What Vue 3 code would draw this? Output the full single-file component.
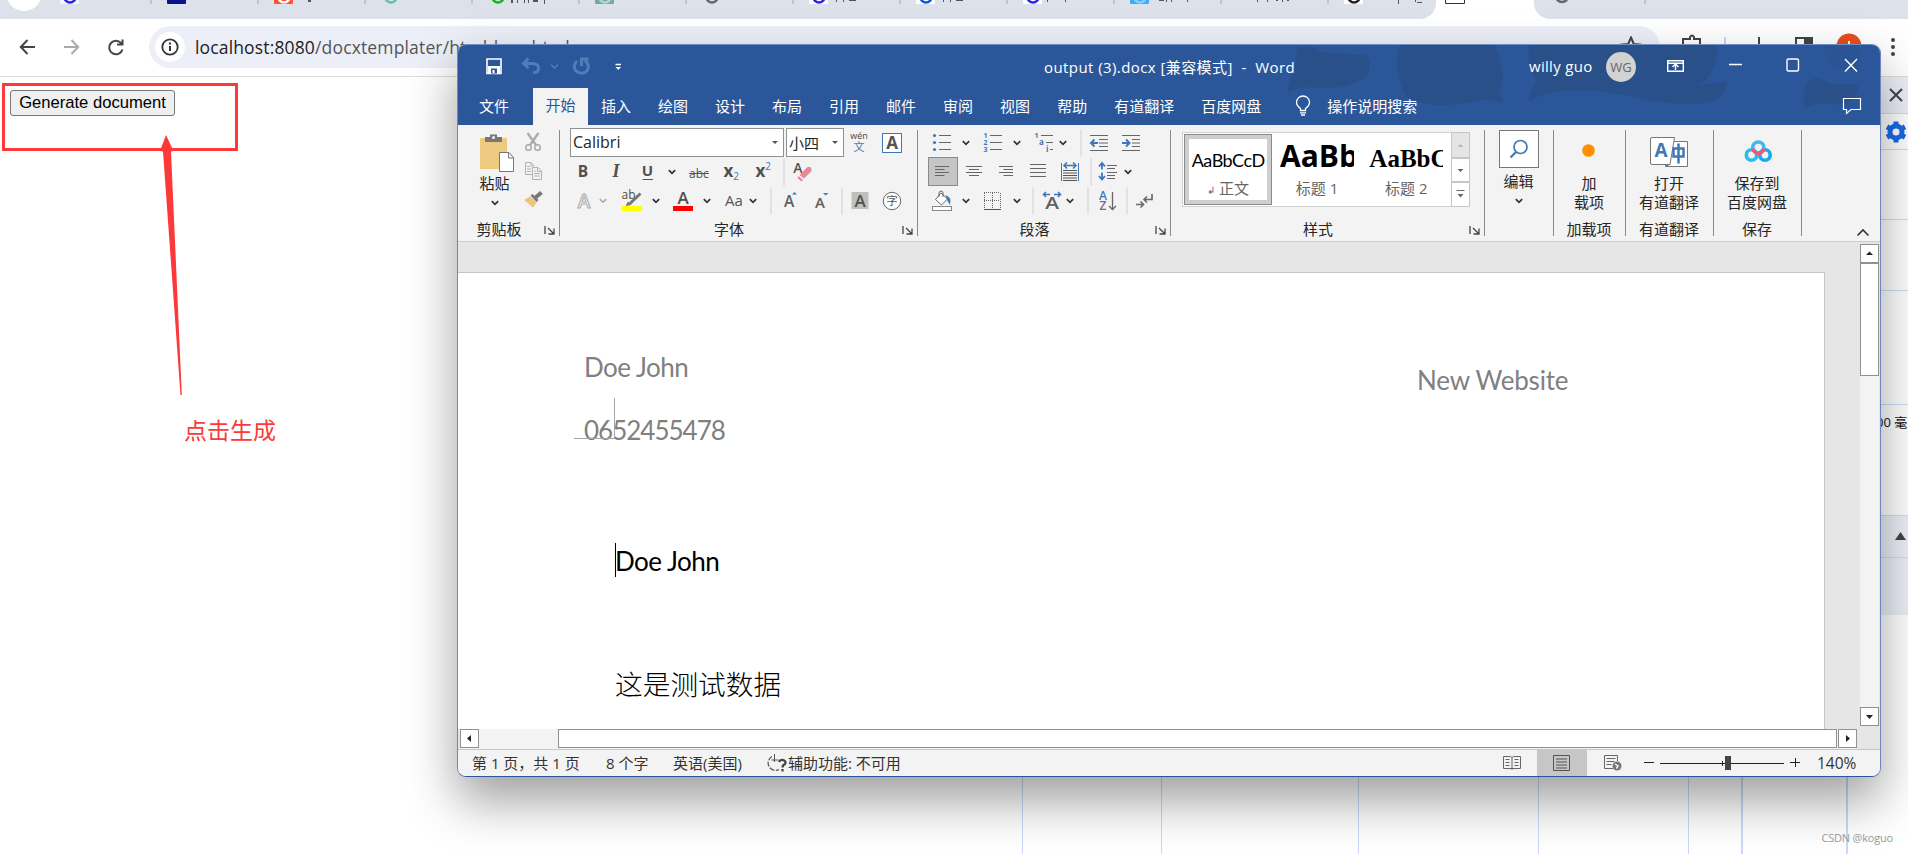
<script setup>
import { ref } from 'vue'

// browser tabs, only their bottom edge is on screen
const tabs = ref([
  { fill: '#f4f6ff', mark: '#2a25e0', text: '' },
  { fill: '#0b128c', mark: '', text: '' },
  { fill: '#ff5430', mark: '#fff', text: 'M49 0h3v2h-3z' },
  { fill: '', mark: '#68bdb2', text: '' },
  { fill: '', mark: '#12b812', text: 'M38 0h2v3h-2zM44 0h1v3h-1zM51 0h1v3h-1zM55 0h1v3h-1zM60 0h5v2h-5zM71 0h1v4h-1z' },
  { fill: '#74aa9c', mark: '#b9d6ce', text: '' },
  { fill: '', mark: '#666', text: '' },
  { fill: '#fff', mark: '#2a25e0', text: 'M42 0h1v2h-1zM49 0h1v2h-1zM55 0h7v1h-7z' },
  { fill: '#fff', mark: '#0d58d8', text: 'M42 0h1v2h-1zM49 0h1v2h-1zM55 0h7v1h-7z' },
  { fill: '#fff', mark: '#2a25e0', text: 'M39 0h1v2h-1zM57 0h1v2h-1z' },
  { fill: '#39adfb', mark: '#8bd0fd', text: 'M44 0h5v1h-5zM51 0h1v2h-1zM56 0h1v2h-1zM72 0h1v2h-1z' },
  { fill: '', mark: '', text: 'M35 0h1v2h-1zM45 0h1v2h-1zM54 0h2v1h-2zM60 0h1v2h-1zM65 0h2v1h-2z' },
  { fill: '#fff', mark: '#222', text: 'M69 0h1v4h-1zM86 0h1v2h-1zM88 2h5v1h-5z' }
])

const menus = ['插入', '绘图', '设计', '布局', '引用', '邮件', '审阅', '视图', '帮助', '有道翻译', '百度网盘']

const T = 'font-family="Open Sans, Noto Sans" '
const icons = {
  chev: '<path d="M8.8 10.1 12 13.3 15.2 10.1" fill="none" stroke="#333" stroke-width="1.7"/>',
  chevOff: '<path d="M8.8 10.1 12 13.3 15.2 10.1" fill="none" stroke="#aaa" stroke-width="1.5"/>',
  sep: '<path d="M12-1.5v27" stroke="#cfcfcf"/>',
  cut: '<path d="M6.500 3 15 15M17.500 3 9 15" stroke="#aaa" stroke-width="2.200"/><circle cx="7.500" cy="17.500" r="2.800" fill="none" stroke="#aaa" stroke-width="1.500"/><circle cx="16.500" cy="17.500" r="2.800" fill="none" stroke="#aaa" stroke-width="1.500"/>',
  copy: '<path d="M11 15.500H4.500V3.500H10L13.500 7M10 3.500V7h3M6 7.500h3M6 10h4M6 12.500h4" fill="none" stroke="#b3b0b3"/><path d="M11.500 8.500H17L20.500 12v8.500h-9zM16.500 8.500v4h4M13 12h2M13 14.500h6M13 17h6" fill="#f3f3f3" stroke="#b3b0b3"/>',
  painter: '<path d="M3 12 9 8.500 15.500 14.500 12 19.500z" fill="#eec47d"/><path d="M9.500 7.500 11.500 6 17.500 12 15.500 14z" fill="#777"/><path d="M14.500 9.500 20.500 4.500" stroke="#777" stroke-width="4"/>',
  pinyin: '<text x="12" y="7.500" ' + T + 'font-size="9" text-anchor="middle" fill="#444">wén</text><text x="12" y="19.500" font-family="Noto Sans CJK SC" font-size="11" text-anchor="middle" fill="#3f78b5">文</text>',
  boxA: '<rect x="2.500" y="2.500" width="19" height="19" fill="#fff" stroke="#3f78b5"/><text x="12" y="18" ' + T + 'font-size="17" font-weight="700" text-anchor="middle" fill="#555">A</text>',
  bold: '<text x="12" y="17" ' + T + 'font-size="15.500" font-weight="700" text-anchor="middle" fill="#505050">B</text>',
  italic: '<text x="12" y="17" font-family="Liberation Serif" font-size="18" font-weight="700" font-style="italic" text-anchor="middle" fill="#505050">I</text>',
  under: '<text x="12.500" y="15.500" ' + T + 'font-size="15" font-weight="700" text-anchor="middle" fill="#505050">U</text><path d="M7.500 19.500h10.500" stroke="#555" stroke-width="1.200"/>',
  strike: '<text x="12" y="17.500" ' + T + 'font-size="12" text-anchor="middle" fill="#555">abc</text><path d="M2 13.500h20" stroke="#555" stroke-width="1.200"/>',
  subs: '<text x="9.500" y="17" ' + T + 'font-size="17" font-weight="700" text-anchor="middle" fill="#505050">x</text><text x="17" y="20" ' + T + 'font-size="10" text-anchor="middle" fill="#3f78b5">2</text>',
  sups: '<text x="9.500" y="17" ' + T + 'font-size="17" font-weight="700" text-anchor="middle" fill="#505050">x</text><text x="17" y="10" ' + T + 'font-size="10" text-anchor="middle" fill="#3f78b5">2</text>',
  eraser: '<text x="7" y="12.500" ' + T + 'font-size="14" font-weight="600" text-anchor="middle" fill="#555">A</text><path d="M8.500 15 16 7.500Q18 6 19.500 7.500L20.500 9Q21 10.500 20 11.500L13 18.500z" fill="#e6879a"/><path d="M7.500 16 12 20 10.500 21.500 6.500 18z" fill="#e6879a"/>',
  outA: '<text x="12" y="19" ' + T + 'font-size="19" font-weight="600" text-anchor="middle" fill="#f6f6f6" stroke="#b0b0b0" stroke-width="1.100">A</text>',
  mark: '<text x="8.500" y="10" ' + T + 'font-size="12" text-anchor="middle" fill="#505050">ab</text><path d="M10 14.500 20.500 4.500" stroke="#777" stroke-width="3"/><path d="M5.500 17 8 12.500 11.500 16z" fill="#777"/><path d="M2 17h20v5H2z" fill="#ff0"/>',
  color: '<text x="12" y="15" ' + T + 'font-size="17" font-weight="600" text-anchor="middle" fill="#505050">A</text><path d="M2 17h20v5H2z" fill="red"/>',
  case: '<text x="12" y="17" ' + T + 'font-size="15" text-anchor="middle" fill="#555">Aa</text>',
  grow: '<text x="11" y="18" ' + T + 'font-size="15.500" font-weight="600" text-anchor="middle" fill="#606060">A</text><path d="M14 5.500 16.500 3 19 5.500z" fill="#3f78b5"/>',
  shrink: '<text x="10" y="18.500" ' + T + 'font-size="15" font-weight="600" text-anchor="middle" fill="#606060">A</text><path d="M13 4h5.500L15.700 6.500z" fill="#3f78b5"/>',
  shade: '<path d="M3.500 3H20.500V20H3.500z" fill="#bfbfbf"/><text x="12" y="17.500" ' + T + 'font-size="17" font-weight="600" text-anchor="middle" fill="#505050">A</text>',
  circled: '<circle cx="12" cy="12" r="8.700" fill="#fff" stroke="#666"/><text x="12" y="16.300" font-family="Noto Sans CJK SC" font-size="11.500" text-anchor="middle" fill="#555">字</text>',
  bullets: '<path d="M9 4.500h12M9 11.500h12M9 18.500h12" stroke="#666"/><g fill="#3f78b5"><circle cx="4.500" cy="4.500" r="1.600"/><circle cx="4.500" cy="11.500" r="1.600"/><circle cx="4.500" cy="18.500" r="1.600"/></g>',
  numbers: '<path d="M9 4.500h12M9 11.500h12M9 18.500h12" stroke="#666"/><g ' + T + 'font-size="7" font-weight="700" fill="#3f78b5"><text x="2.500" y="7">1</text><text x="2.500" y="14">2</text><text x="2.500" y="21">3</text></g>',
  levels: '<path d="M9 4.500h12M14 11.500h7M18 18.500h3" stroke="#666"/><g ' + T + 'font-weight="700" fill="#3f78b5"><text x="2.500" y="7" font-size="7">1</text><text x="7" y="13.500" font-size="8">a</text><text x="14" y="21" font-size="8">i</text></g>',
  outdent: '<path d="M3 4.500h18M12 8.500h9M12 12h9M12 15.500h9M3 19.500h18" stroke="#666"/><path d="M11 12H5M7.500 8.500 4 12 7.500 15.500" fill="none" stroke="#3f78b5" stroke-width="2"/>',
  indent: '<path d="M3 4.500h18M13 8.500h8M13 12h8M13 15.500h8M3 19.500h18" stroke="#666"/><path d="M3 12H9.500M7 8.500 10.500 12 7 15.500" fill="none" stroke="#3f78b5" stroke-width="2"/>',
  left: '<rect x="-2.500" y="-2.500" width="29" height="28" fill="#c5c5c5" stroke="#8a8a8a"/><path d="M4 6.500h14M4 9.500h9.500M4 12.500h14M4 15.500h9.500" stroke="#666"/>',
  center: '<path d="M4 6.500h16M7 9.500h10M4 12.500h16M7 15.500h10" stroke="#666"/>',
  right: '<path d="M5 6.500h14M9.500 9.500h9.500M5 12.500h14M9.500 15.500h9.500" stroke="#666"/>',
  justify: '<path d="M4 4.500h16M4 8.500h16M4 12.500h16M4 16.500h16" stroke="#666"/>',
  spread: '<path d="M3.500 3v18M20.500 3v18" stroke="#3f78b5"/><path d="M7 5.500h10M9 2.500 6 5.500 9 8.500M15 2.500 18 5.500 15 8.500" fill="none" stroke="#3f78b5" stroke-width="1.600"/><path d="M5 10.500h14M5 13h14M5 15.500h14M5 18h14M5 20.500h14" stroke="#555"/>',
  spacing: '<path d="M6 4v5.500M3 6.500 6 3 9 6.500M6 12.500v6M3 16 6 19.500 9 16" fill="none" stroke="#3f78c0" stroke-width="1.800"/><path d="M11 5.500h10M11 8.500h8M11 12.500h10M11 15.500h8M11 18.500h8" stroke="#666"/>',
  fill: '<path d="M11 4 17.500 10 11.500 16 5.500 10.500z" fill="#fff" stroke="#666"/><path d="M9 8V4Q9 2 11 2T13 4V8" fill="none" stroke="#666"/><path d="M15.500 6Q22 8 20 16L17.500 12z" fill="#3f78b5"/><rect x="2.500" y="17.500" width="19" height="4" fill="#fff" stroke="#888"/>',
  borders: '<path d="M4 3.500h16M4 11.500h16M4.500 4v16M12.500 4v16M20.500 4v16" stroke="#666" stroke-dasharray="1 1"/><path d="M4 20.500h17" stroke="#555"/>',
  scaleA: '<text transform="translate(12 19.500) scale(1.300 1)" ' + T + 'font-size="16" font-weight="600" text-anchor="middle" fill="#606060">A</text><path d="M3 5.500h7M6 3 3.500 5.500 6 8M14 5.500h7M18 3 20.500 5.500 18 8" fill="none" stroke="#3f78b5" stroke-width="1.600"/>',
  sort: '<text x="8" y="11" ' + T + 'font-size="12" font-weight="600" text-anchor="middle" fill="#3f78b5">A</text><text x="8" y="21" ' + T + 'font-size="12" font-weight="600" text-anchor="middle" fill="#9354ab">Z</text><path d="M17.500 3v17M14 17 17.500 20.500 21 17" fill="none" stroke="#666" stroke-width="1.300"/>',
  marks: '<path d="M20 5v5.500H12.500M15 7.500 12 10.500 15 13.500M4 15.500h7M8.500 12.500 11.500 15.500 8.500 18.500" fill="none" stroke="#6a6a6a" stroke-width="1.700"/>'
}

// [icon, centre] pairs turned into the gaps of a flex row
const row = (start, items) => {
  let x = start
  return items.map(([name, centre]) => {
    const gap = centre - 12 - x
    x = centre + 12
    return { name, gap }
  })
}

const fontRows = [
  row(844, [['pinyin', 859], ['boxA', 892]]),
  row(570, [['bold', 583], ['italic', 616], ['under', 647], ['chev', 672], ['strike', 699], ['subs', 731], ['sups', 763], ['sep', 783.5], ['eraser', 803]]),
  row(570, [['outA', 584], ['chevOff', 603], ['mark', 632], ['chev', 656], ['color', 683], ['chev', 707], ['case', 734], ['chev', 753], ['sep', 770.5], ['grow', 790], ['shrink', 822], ['sep', 841.5], ['shade', 860], ['circled', 892]])
]
const paraRows = [
  row(918, [['bullets', 942], ['chev', 966], ['numbers', 993], ['chev', 1017], ['levels', 1044], ['chev', 1063], ['sep', 1080.5], ['outdent', 1099], ['indent', 1131]]),
  row(918, [['left', 943], ['center', 974], ['right', 1006], ['justify', 1038], ['spread', 1070], ['sep', 1090.5], ['spacing', 1108], ['chev', 1128]]),
  row(918, [['fill', 942], ['chev', 966], ['borders', 992], ['chev', 1017], ['sep', 1032.5], ['scaleA', 1052], ['chev', 1070], ['sep', 1087.5], ['sort', 1107], ['sep', 1126.5], ['marks', 1144]])
]
</script>

<template>
  <main class="screen">
    <!-- browser -->
    <div class="tabstrip">
      <div class="tab-search"></div>
      <svg v-for="(tab, i) in tabs" :key="i" class="tab" width="107" height="19">
        <rect v-if="tab.fill" x="15" y="-14" width="19" height="18" rx="1" :fill="tab.fill" />
        <circle v-if="tab.mark" cx="25" cy="-3" r="5.5" fill="none" stroke-width="2.5" :stroke="tab.mark" />
        <path :d="tab.text" fill="#555" />
        <path v-if="i < 12" d="M107 0v4" stroke="#c4c4c4" stroke-width="4" />
      </svg>
      <div class="tab-active">
        <svg width="20" height="4"><path d="M.5 0v3.500h19V0" fill="none" stroke="#333" /></svg>
      </div>
      <div class="tab-last">
        <svg width="120" height="4"><circle cx="28" cy="-4" r="6" fill="none" stroke="#666" stroke-width="2.500" /><path d="M111 0v4" stroke="#c4c4c4" stroke-width="2" /></svg>
      </div>
    </div>
    <div class="toolbar">
      <svg class="nav" width="120" height="24" viewBox="0 0 120 24" fill="none" stroke-width="2">
        <path d="M16 12H2M8.500 5 1.800 12 8.500 19" stroke="#444" />
        <path d="M45 12H59M52.500 5 59.200 12 52.500 19" stroke="#aaa" />
        <path d="M102.500 8.500A6.800 6.800 0 1 0 103.500 14.500M103.500 4.500V9.500H98" stroke="#444" />
      </svg>
      <div class="omnibox">
        <span class="info">
          <svg width="20" height="20" viewBox="0 0 20 20"><circle cx="10" cy="10" r="7.700" fill="none" stroke="#333" stroke-width="1.800" /><path d="M10 9v5M10 5.500v2" stroke="#333" stroke-width="2" /></svg>
        </span>
        <span class="url"><b>localhost:8080</b>/docxtemplater/htmldocx.html</span>
        <svg class="star" width="22" height="22" viewBox="0 0 22 22"><path d="M11 1.500 13.800 8 20.500 8.600 15.500 13 17 20 11 16.500 5 20 6.500 13 1.500 8.600 8.200 8z" fill="none" stroke="#444" stroke-width="2" /></svg>
      </div>
      <svg class="actions" width="240" height="40" viewBox="0 0 240 40" fill="none" stroke="#444" stroke-width="2">
        <path d="M23 25V12H30V10Q32 7 34 10V12H40V25" />
        <path d="M65 10v20" stroke="#c6d8f8" />
        <path d="M99 10v14M93 18 99 24 105 18" />
        <path d="M136 25V11H152V25" /><path d="M145 11h7v12h-7z" fill="#444" />
        <circle cx="189" cy="19" r="12.500" fill="#ea4d1c" stroke="none" /><path d="M189 14v6" stroke="#fff" />
        <g fill="#444" stroke="none"><circle cx="233" cy="13" r="2" /><circle cx="233" cy="20" r="2" /><circle cx="233" cy="27" r="2" /></g>
      </svg>
    </div>

    <div class="viewport">
      <div class="webpage">
        <button class="generate">Generate document</button>
      </div>
      <!-- devtools behind the word window -->
      <div class="devtools">
        <div class="columns"><i v-for="n in 7" :key="n"></i></div>
        <div class="side">
          <div class="side-close"><svg width="16" height="16"><path d="M2 2 14 14M14 2 2 14" stroke="#444" stroke-width="2" /></svg></div>
          <div class="side-gear">
            <svg width="22" height="22" viewBox="-11 -11 22 22"><circle r="6" fill="none" stroke="#1a6be8" stroke-width="5" /><path d="M0-10.500V-7M0 7v3.500M-9-5.200-6-3.500M6 3.500 9 5.200M-9 5.200-6 3.500M6-3.500 9-5.200" stroke="#1a6be8" stroke-width="5" /></svg>
          </div>
          <div class="side-a"></div>
          <div class="side-b"></div>
          <div class="side-c">00 毫</div>
          <div class="side-e"><svg width="11" height="10"><path d="M5.500 0 11 8H0z" fill="#444" /></svg></div>
          <div class="side-f"></div>
        </div>
      </div>
    </div>

    <!-- word window -->
    <section class="word">
      <header class="titlebar">
        <svg class="art" width="860" height="80" viewBox="1020 45 860 80" fill="#2a5089">
          <path d="M1297 48Q1312 44 1320 52L1365 55Q1375 65 1365 78 1345 90 1320 88 1300 85 1287 93 1290 78 1295 68z" />
          <path d="M1400 45H1495Q1508 75 1499 93 1503 97 1502 104 1488 98 1480 100 1430 112 1405 96 1392 65 1400 45z" />
          <path d="M1529 45H1717Q1717 84 1690 86L1664 88 1716 83 1727 82Q1727 100 1700 104 1660 105 1630 96 1560 83 1529 101 1530 90 1537 82 1526 65 1529 45z" />
          <path d="M1823 45H1860V70H1832z" opacity=".4" />
          <path d="M1804 109Q1801 78 1818 78 1828 82 1834 85 1848 82 1858 86 1860 100 1840 105 1815 100 1804 109z" />
        </svg>
        <div class="quick">
          <svg class="q-icons" width="160" height="24" viewBox="0 0 160 24" fill="none">
            <path d="M5 4h14v14.500H5z" stroke="#fff" stroke-width="1.600" /><path d="M6 11h12v7H6z" fill="#fff" /><path d="M9 13.500h6v5H9z" fill="#2b579a" /><path d="M10.500 15h2v3h-2z" fill="#fff" />
            <path d="M42 8.500H51Q57 9 56.500 14 56 18 51 17.500M46.500 3.500 41.500 8.500 46.500 13" stroke="#4f7db8" stroke-width="3" />
            <path d="M69 9.500 72.500 13 76 9.500" stroke="#4f7db8" stroke-width="1.500" />
            <path d="M95 6Q90 11 94 16 100 20.500 105 16 108.500 10 103 5.500M106.500 4H99.500V11" stroke="#4f7db8" stroke-width="3" />
            <path d="M133.500 9.500h5.500" stroke="#fff" stroke-width="1.300" /><path d="M133.500 12h5.500L136.300 15z" fill="#fff" />
          </svg>
          <h1 class="doc-title">output (3).docx [兼容模式]&nbsp; -&nbsp; Word</h1>
          <span class="user">willy guo</span>
          <span class="avatar">WG</span>
          <svg class="win-btns" width="206" height="24" viewBox="0 0 206 24" fill="none" stroke="#fff" stroke-width="1.400">
            <path d="M9.700 5.700H25.300V16.300H9.700zM10 8.200H25M17.500 15V9.500M14.500 12 17.500 9 20.500 12" />
            <path d="M71 9.500h13" /><rect x="129" y="4" width="11.500" height="12" rx="1.500" /><path d="M187 4 199 16.500M199 4 187 16.500" />
          </svg>
        </div>
        <nav class="menu">
          <span class="file">文件</span>
          <span class="current">开始</span>
          <span v-for="m in menus" :key="m" class="item">{{ m }}</span>
          <svg class="bulb" width="16" height="22" viewBox="0 0 16 22" fill="none" stroke="#fff" stroke-width="1.300"><path d="M5.500 15.500V13.500Q1.500 10.500 1.500 7.500A6.500 6.500 0 0 1 14.500 7.500Q14.500 10.500 10.500 13.500V15.500z" /><path d="M5 17.800h6M6 20h4" /></svg>
          <span>操作说明搜索</span>
          <svg class="comment" width="20" height="18" viewBox="0 0 20 18"><path d="M1.500 1.500h17v11H9L4.500 16.500V12.500h-3z" fill="none" stroke="#fff" stroke-width="1.200" /></svg>
        </nav>
      </header>

      <div class="ribbon">
        <div class="group clipboard">
          <div class="tools clip-tools">
            <div class="paste">
              <svg width="36" height="40" viewBox="0 0 36 40"><path d="M1 5h27v31H1z" fill="#eec980" /><path d="M6 4h5V1.500h7V4h5v5H6z" fill="#777" /><circle cx="14.500" cy="4.500" r="1.500" fill="#f3f3f3" /><path d="M20.500 19.500H30L34.500 24.500V38.500h-14zM29.500 19.500V25H34.500" fill="#fff" stroke="#777" /></svg>
              <span>粘贴</span>
              <svg class="ic" width="24" height="24" v-html="icons.chev"></svg>
            </div>
            <div class="clip-side">
              <svg v-for="n in ['cut', 'copy', 'painter']" :key="n" class="ic" width="24" height="24" v-html="icons[n]"></svg>
            </div>
          </div>
          <div class="caption wide">剪贴板<svg class="launch" width="12" height="12"><path d="M1 2v8M4 4 9.500 9.500M10 4.500V10H4.500" fill="none" stroke="#444" stroke-width="1.300" /></svg></div>
        </div>

        <div class="group font">
          <div class="tools">
            <div class="row">
              <div class="combo family">Calibri<i></i></div>
              <div class="combo size">小四<i></i></div>
              <svg v-for="(t, i) in fontRows[0]" :key="i" class="ic" width="24" height="24" :style="{ marginLeft: t.gap + 'px' }" v-html="icons[t.name]"></svg>
            </div>
            <div v-for="r in [1, 2]" :key="r" class="row">
              <svg v-for="(t, i) in fontRows[r]" :key="i" class="ic" width="24" height="24" :style="{ marginLeft: t.gap + 'px' }" v-html="icons[t.name]"></svg>
            </div>
          </div>
          <div class="caption wide">字体<svg class="launch" width="12" height="12"><path d="M1 2v8M4 4 9.500 9.500M10 4.500V10H4.500" fill="none" stroke="#444" stroke-width="1.300" /></svg></div>
        </div>

        <div class="group para">
          <div class="tools">
            <div v-for="(r, k) in paraRows" :key="k" class="row">
              <svg v-for="(t, i) in r" :key="i" class="ic" width="24" height="24" :style="{ marginLeft: t.gap + 'px' }" v-html="icons[t.name]"></svg>
            </div>
          </div>
          <div class="caption wide">段落<svg class="launch" width="12" height="12"><path d="M1 2v8M4 4 9.500 9.500M10 4.500V10H4.500" fill="none" stroke="#444" stroke-width="1.300" /></svg></div>
        </div>

        <div class="group styles">
          <div class="tools">
            <div class="gallery">
              <div class="style on"><p class="s0">AaBbCcD</p><small><em>↲</em> 正文</small></div>
              <div class="style"><p class="s1">AaBb</p><small>标题 1</small></div>
              <div class="style"><p class="s2">AaBbC</p><small>标题 2</small></div>
              <svg class="gal-scroll" width="19" height="75" viewBox="0 0 19 75"><path d="M.5.500h18v25H.5z" fill="#e5e5e5" stroke="#c6c6c6" /><path d="M.5 26.500h18v23H.5zM.5 50.500h18v24H.5z" fill="#fff" stroke="#c6c6c6" /><path d="M6.500 15h6L9.500 12z" fill="#bbb" /><path d="M6.500 37h6L9.500 40zM6.500 62h6L9.500 65.500z" fill="#666" /><path d="M5.500 58.500h8" stroke="#666" /></svg>
            </div>
          </div>
          <div class="caption wide">样式<svg class="launch" width="12" height="12"><path d="M1 2v8M4 4 9.500 9.500M10 4.500V10H4.500" fill="none" stroke="#444" stroke-width="1.300" /></svg></div>
        </div>

        <div class="group edit">
          <div class="tools big">
            <svg class="find" width="40" height="38" viewBox="0 0 40 38"><rect x=".5" y=".5" width="39" height="37" fill="#fff" stroke="#777" /><circle cx="21.500" cy="17" r="6.500" fill="none" stroke="#3f78b5" stroke-width="1.700" /><path d="M17 22 11.500 27.500" stroke="#3f78b5" stroke-width="2.200" /></svg>
            <span>编辑</span>
            <svg class="ic" width="24" height="24" v-html="icons.chev"></svg>
          </div>
        </div>
        <div class="group addin">
          <div class="tools big">
            <svg width="40" height="44" viewBox="0 0 40 44"><circle cx="19.500" cy="20.500" r="6.300" fill="#ff8f00" /></svg>
            <span>加</span><span>载项</span>
          </div>
          <div class="caption">加载项</div>
        </div>
        <div class="group youdao">
          <div class="tools big">
            <svg width="40" height="44" viewBox="0 0 40 44"><path d="M22 11.500H38.500V36.500H16.500V34" fill="#fff" stroke="#777" /><path d="M3 7.500H25.500L21 34.500H3Q1.500 34.500 1.500 33V9Q1.500 7.500 3 7.500z" fill="#fff" stroke="#777" /><path d="M21 34.500 17 37V34.500z" fill="#777" /><text x="12" y="27" font-family="Open Sans" font-size="19" font-weight="700" text-anchor="middle" fill="#3f78b5">A</text><path d="M24.500 18.500h10v8h-10zM29.500 13.500v20" fill="none" stroke="#3f78b5" stroke-width="2.500" /></svg>
            <span>打开</span><span>有道翻译</span>
          </div>
          <div class="caption">有道翻译</div>
        </div>
        <div class="group baidu">
          <div class="tools big">
            <svg width="40" height="44" viewBox="0 0 40 44" fill="none" stroke-width="3.600"><circle cx="14.500" cy="25" r="5.200" stroke="#27bdf2" /><circle cx="28" cy="25" r="5.200" stroke="#18a8f5" /><circle cx="21.300" cy="17.500" r="5.500" stroke="#3fb9ee" /><path d="M15.900 18.500A5.500 5.500 0 0 0 26.800 18.500" stroke="#f4586e" /></svg>
            <span>保存到</span><span>百度网盘</span>
          </div>
          <div class="caption">保存</div>
        </div>
        <svg class="fold" width="14" height="9"><path d="M1.500 7.500 7 2 12.500 7.500" fill="none" stroke="#333" stroke-width="1.600" /></svg>
      </div>

      <div class="work">
        <div class="canvas">
          <article class="page">
            <div class="head">
              <div class="head-left">
                <p>Doe John</p>
                <p class="phone">0652455478</p>
                <svg class="corner" width="42" height="42"><path d="M40.500 0v40M0 40.500h41" stroke="#a6a6a6" /></svg>
              </div>
              <p class="site">New Website</p>
            </div>
            <p class="name">Doe John</p>
            <p class="data">这是测试数据</p>
          </article>
        </div>
        <div class="vscroll">
          <svg width="19" height="19"><rect x=".5" y=".5" width="18" height="18" fill="#fff" stroke="#919191" /><path d="M6 11h7L9.500 7.500z" fill="#222" /></svg>
          <div class="vthumb"></div>
          <svg class="down" width="19" height="19"><rect x=".5" y=".5" width="18" height="18" fill="#fff" stroke="#919191" /><path d="M6 8h7L9.500 12z" fill="#222" /></svg>
        </div>
      </div>
      <div class="hscroll">
        <svg width="19" height="19"><rect x=".5" y=".5" width="18" height="18" fill="#fff" stroke="#919191" /><path d="M11 6v7L7 9.500z" fill="#222" /></svg>
        <div class="hthumb"></div>
        <svg width="19" height="19"><rect x=".5" y=".5" width="18" height="18" fill="#fff" stroke="#919191" /><path d="M8 6v7L12 9.500z" fill="#222" /></svg>
      </div>
      <footer class="status">
        <span class="st-page">第 1 页，共 1 页</span>
        <span class="st-words">8 个字</span>
        <span class="st-lang">英语(美国)</span>
        <svg class="st-acc" width="21" height="20" viewBox="0 0 21 20"><path d="M5 3.500A7 7 0 1 0 12 16.500" fill="none" stroke="#555" stroke-dasharray="5 1.500" stroke-width="1.200" /><path d="M7.500 1v8M4.500 7h7" stroke="#555" /><path d="M12 9Q13 6.500 16 7 19.500 8 18 11 15.500 12 15.500 14.500M15.500 16v2.500" fill="none" stroke="#444" stroke-width="2.300" /></svg>
        <span>辅助功能: 不可用</span>
        <div class="views">
          <svg width="34" height="26" fill="none" stroke="#666"><path d="M.5 6.500H7.500Q9 7 9 8V20M17.500 6.500H10.500Q9 7 9 8M.5 6.500V18.500H17.500V6.500M2.500 9.500h4M2.500 12.500h4M2.500 15.500h4M11.500 9.500h4M11.500 12.500h4M11.500 15.500h4" /></svg>
          <span class="view-on"><svg width="18" height="16" fill="none" stroke="#555"><path d="M.5.500h16v15H.5zM3 4h11M3 7h11M3 10h11M3 13h11" /></svg></span>
          <svg width="19" height="16" viewBox="0 0 19 16"><path d="M9 13.500H.5V.500h13V6M2.500 3.500h9M2.500 6.500h8M2.500 9.500h5" fill="none" stroke="#666" /><circle cx="13" cy="11" r="4.500" fill="#777" /><path d="M11 9 14 11 12.500 13.500" stroke="#f3f3f3" stroke-width="1.500" fill="none" /></svg>
        </div>
        <svg class="zoom" width="160" height="20" viewBox="0 0 160 20" stroke="#222"><path d="M1 9.500h10M17 10.500h124M79.500 8v5M147 9.500h10M152.500 5v9" /><path d="M82 3h6v14h-6z" fill="#444" stroke="none" /></svg>
        <span class="percent">140%</span>
      </footer>
    </section>

    <!-- red annotation over the page -->
    <div class="frame"></div>
    <svg class="arrow" width="30" height="262"><path d="M8 0 15.500 16 13 16.500 23.800 260 22.500 260 5 16.500 2 16z" fill="#fc3838" /></svg>
    <span class="hint">点击生成</span>
    <span class="watermark">CSDN @koguo</span>
  </main>
</template>

<style scoped>
.screen {
  position: relative;
  width: 1908px;
  height: 854px;
  overflow: hidden;
  background: #fff;
  font-family: "Open Sans", "Noto Sans CJK SC", sans-serif;
  font-size: 15px;
  color: #262626;
}
svg {
  display: block;
  flex: none;
}
p, h1 {
  margin: 0;
  font-weight: 400;
}

/* browser */
.tabstrip {
  display: flex;
  height: 19px;
  background: #fff;
}
.tab-search {
  width: 45px;
  background: radial-gradient(ellipse 17px 15px at 24px -4px, #fff 98%, #dde2ea);
}
.tab {
  background: #dde2ea;
}
.tab:last-of-type {
  border-bottom-right-radius: 16px;
}
.tab-active {
  width: 98px;
  padding-left: 9px;
  box-sizing: border-box;
}
.tab-last {
  flex: 1;
  background: #dde2ea;
  border-bottom-left-radius: 16px;
}
.toolbar {
  display: flex;
  align-items: flex-start;
  height: 57px;
  border-bottom: 1px solid #dcdcdc;
}
.nav {
  margin: 16px 10px 0 19px;
}
.omnibox {
  display: flex;
  align-items: center;
  width: 1511px;
  height: 42px;
  margin-top: 7px;
  border-radius: 21px;
  background: #eceff8;
}
.info {
  display: grid;
  place-items: center;
  width: 30px;
  height: 30px;
  margin-left: 6px;
  border-radius: 50%;
  background: #fff;
}
.url {
  margin-left: 10px;
  font-size: 17.5px;
  line-height: 24px;
  letter-spacing: .15px;
  padding-bottom: 1px;
  color: #555;
}
.url b {
  font-weight: 400;
  color: #222;
}
.star {
  margin-left: auto;
  margin-right: 18px;
}
.actions {
  margin-top: 8px;
}
.viewport {
  display: flex;
  height: 777px;
}
.webpage {
  flex: 1;
  padding: 13px 10px;
}
.generate {
  width: 165px;
  height: 26px;
  padding: 0 0 1px;
  border: 1px solid #767676;
  border-radius: 3px;
  background: #efefef;
  font: 16.6px "Liberation Sans", Arial, sans-serif;
  color: #000;
}
.devtools {
  display: flex;
  width: 886px;
}
.columns {
  display: grid;
  grid-template-columns: 139px 197px 180px 150px 53px 105px 30px;
  width: 854px;
}
.columns i {
  border-left: 1px solid #c8dafa;
}
.columns i:nth-child(n+6) {
  border-left-width: 2px;
}
.side {
  width: 32px;
  margin-left: auto;
}
.side div {
  display: flex;
  justify-content: flex-end;
  box-sizing: border-box;
  border-bottom: 1px solid #cbdcf8;
  background: #fff;
}
.side .side-close { height: 37px; padding: 10px 4px; background: #eceff8; }
.side .side-gear { height: 36px; padding: 7px 1px; }
.side .side-a { height: 70px; }
.side .side-b { height: 185px; background: linear-gradient(#cbdcf8, #cbdcf8) 0 70px / 100% 1px no-repeat, #fff; }
.side .side-c { height: 111px; padding-top: 7px; font-size: 13px; color: #111; justify-content: flex-start; white-space: nowrap; }
.side .side-e { height: 42px; padding: 16px 2px; background: #eceff8; }
.side .side-f { height: 57px; background: #eceff8; border: 0; }

/* window */
.word {
  position: absolute;
  left: 457px;
  top: 44px;
  width: 1424px;
  height: 733px;
  box-sizing: border-box;
  border: 1px solid #2b579a;
  border-color: #6d8fc4 #6d86bd #2b579a;
  border-radius: 9px;
  overflow: hidden;
  background: #e6e6e6;
  box-shadow: 0 24px 50px rgba(0, 0, 0, .38);
}
.titlebar {
  position: relative;
  height: 80px;
  background: #2b579a;
  color: #fff;
}
.art {
  position: absolute;
  right: 0;
  top: 0;
}
.quick {
  position: relative;
  display: flex;
  align-items: center;
  height: 43px;
}
.q-icons {
  margin-left: 24px;
}
.doc-title {
  width: 250px;
  margin-left: 402px;
  font-size: 15px;
  letter-spacing: .42px;
  text-align: center;
  white-space: nowrap;
}
.user {
  width: 66px;
  margin-left: 235px;
  padding-bottom: 1px;
  letter-spacing: .3px;
  white-space: nowrap;
}
.avatar {
  display: grid;
  place-items: center;
  width: 30px;
  height: 30px;
  margin-left: 11px;
  border-radius: 50%;
  background: #d2d2d2;
  font-size: 13px;
  color: #666;
}
.win-btns {
  margin-left: 22px;
}
.menu {
  position: relative;
  display: flex;
  align-items: center;
  height: 35px;
  padding-bottom: 2px;
}
.file {
  width: 75px;
  padding-left: 21px;
  box-sizing: border-box;
}
.current {
  width: 55px;
  height: 37px;
  margin: 0 13px -2px 0;
  line-height: 35px;
  text-align: center;
  background: #f3f3f3;
  color: #2b579a;
}
.item {
  margin-right: 27px;
}
.bulb {
  margin: 0 16px 0 7px;
}
.comment {
  margin-left: auto;
  margin-right: 18px;
}

/* ribbon */
.ribbon {
  display: flex;
  height: 116px;
  background: #f3f3f3;
  border-bottom: 1px solid #d0d0d0;
}
.group {
  display: flex;
  flex-direction: column;
  flex: none;
  box-sizing: border-box;
  background: linear-gradient(#8a8a8a, #8a8a8a) 100% 5px / 1px 106px no-repeat;
}
.clipboard { width: 102px; }
.font { width: 358px; }
.para { width: 253px; }
.styles { width: 314px; }
.edit { width: 69px; }
.addin { width: 72px; }
.youdao { width: 88px; }
.baidu { width: 88px; }
.tools {
  height: 92px;
  padding-top: 3px;
  box-sizing: border-box;
}
.row {
  display: flex;
  align-items: center;
  height: 29px;
}
.ic {
  overflow: visible;
}
.caption {
  position: relative;
  height: 24px;
  line-height: 24px;
  padding-right: 2px;
  text-align: center;
}
.launch {
  position: absolute;
  right: 4px;
  top: 7px;
}
.caption.wide { padding-right: 20px; }
.clip-tools {
  display: flex;
}
.paste {
  display: flex;
  flex-direction: column;
  align-items: center;
  width: 63px;
  padding: 5px 0 0 10px;
  box-sizing: border-box;
  line-height: 20px;
}
.paste > svg:first-child { margin-left: 5px; }
.paste .ic { margin-top: -2px; }
.clip-side {
  display: flex;
  flex-direction: column;
  gap: 5px;
  padding: 2px 0 0;
}
.font .row:not(:first-child) { padding-left: 10px; }
.combo {
  display: flex;
  align-items: center;
  justify-content: space-between;
  height: 29px;
  padding: 0 5px 1px 2px;
  box-sizing: border-box;
  border: 1px solid #919191;
  background: #fff;
  font-size: 16px;
}
.combo i {
  border: 3.5px solid transparent;
  border-top-color: #555;
  border-bottom: 0;
}
.family { width: 214px; margin: 0 2px 0 10px; }
.size { width: 58px; font-size: 15px; }
.gallery {
  display: flex;
  width: 288px;
  height: 75px;
  margin: 4px 0 0 11px;
  box-sizing: border-box;
  background: #fff;
  box-shadow: inset 0 0 0 1px #d0d0d0;
}
.style {
  width: 90px;
  height: 71px;
  margin-top: 2px;
  box-sizing: border-box;
  text-align: center;
  white-space: nowrap;
  overflow: hidden;
}
.style.on {
  margin-left: 2px;
  width: 89px;
  border: 1px solid #8a8a8a;
  box-shadow: inset 0 0 0 4px #d0cecd;
}
.style small {
  display: block;
  font-size: 15px;
  line-height: 20px;
  color: #666;
}
.style em {
  font-size: 10px;
  font-style: normal;
}
.style p {
  width: 76px;
  height: 44px;
  margin: 0 auto;
  overflow: hidden;
  color: #000;
}
.style.on p { height: 43px; }
.style .s0 { font: 18px/50px Lato, sans-serif; letter-spacing: -.5px; }
.style .s1 { width: 74px; font: 700 30px/44px "Open Sans", sans-serif; text-align: left; }
.style .s2 { width: 74px; font: 700 25px/49px "Liberation Serif", serif; text-align: left; }
.gal-scroll {
  margin-left: auto;
}
.big {
  display: flex;
  flex-direction: column;
  align-items: center;
  padding: 5px 2px 0 0;
  line-height: 19px;
}
.edit .big { line-height: 26px; }
.edit .ic { margin-top: -5px; }
.fold {
  align-self: flex-end;
  margin: 0 0 4px 54px;
}

/* document */
.work {
  display: flex;
  justify-content: space-between;
  height: 487px;
}
.canvas {
  padding-top: 30px;
}
.page {
  width: 1367px;
  height: 457px;
  box-sizing: border-box;
  padding: 76px 0 0 126px;
  border-top: 1px solid #c6c6c6;
  border-right: 1px solid #c6c6c6;
  background: #fff;
  font-family: Lato, "Noto Sans CJK SC", sans-serif;
  font-size: 26px;
  line-height: 36px;
  letter-spacing: -.5px;
  color: #000;
}
.head {
  display: flex;
  height: 188px;
  color: #808080;
}
.head-left {
  position: relative;
  width: 833px;
}
.phone {
  margin-top: 27px;
  letter-spacing: -1px;
}
.corner {
  position: absolute;
  left: -10px;
  top: 49px;
}
.site {
  margin-top: 13px;
  letter-spacing: -.2px;
}
.name {
  width: 120px;
  margin-left: 31px;
  padding-top: 6px;
  background: linear-gradient(#000, #000) 0 6px / 1px 34px no-repeat;
}
.data {
  margin: 88px 0 0 31px;
  font-size: 27.7px;
  font-weight: 300;
  letter-spacing: 0;
}
.vscroll {
  display: flex;
  flex-direction: column;
  width: 19px;
  height: 482px;
  margin: 2px 1px 0 0;
  background: #f3f3f3;
}
.vthumb {
  height: 113px;
  box-sizing: border-box;
  border: 1px solid #919191;
  background: #fff;
}
.down {
  margin-top: auto;
}
.hscroll {
  display: flex;
  gap: 1px;
  width: 1397px;
  height: 20px;
  margin-left: 2px;
  background: #f3f3f3;
}
.hthumb {
  flex: 1;
  height: 19px;
  margin-left: 78px;
  box-sizing: border-box;
  border: 1px solid #919191;
  background: #fff;
}
.status {
  display: flex;
  align-items: center;
  height: 27px;
  padding-bottom: 1px;
  box-sizing: border-box;
  border-top: 1px solid #c6c6c6;
  background: #f3f3f3;
  line-height: 20px;
  white-space: nowrap;
  color: #333;
}
.st-page { width: 134px; padding-left: 14px; }
.st-words { width: 67px; }
.st-lang { width: 94px; }
.views {
  display: flex;
  align-items: center;
  margin-left: auto;
}
.view-on {
  display: grid;
  place-items: center;
  width: 50px;
  height: 26px;
  margin: 0 17px -1px 0;
  background: #c6c6c6;
}
.zoom { margin-left: 20px; }
.percent { width: 40px; margin: 0 23px 0 14px; font-size: 15.5px; }

/* annotation */
.frame {
  position: absolute;
  left: 2px;
  top: 83px;
  width: 236px;
  height: 68px;
  box-sizing: border-box;
  border: 3px solid #fc3838;
}
.arrow {
  position: absolute;
  left: 158px;
  top: 135px;
}
.hint {
  position: absolute;
  left: 184px;
  top: 413px;
  font-size: 23px;
  line-height: 34px;
  color: #fc3838;
}
.watermark {
  position: absolute;
  right: 15px;
  top: 830px;
  font-size: 11px;
  line-height: 16px;
  letter-spacing: -.2px;
  color: #999;
}
</style>

<style>
body {
  margin: 0;
  overflow: hidden;
}
</style>
